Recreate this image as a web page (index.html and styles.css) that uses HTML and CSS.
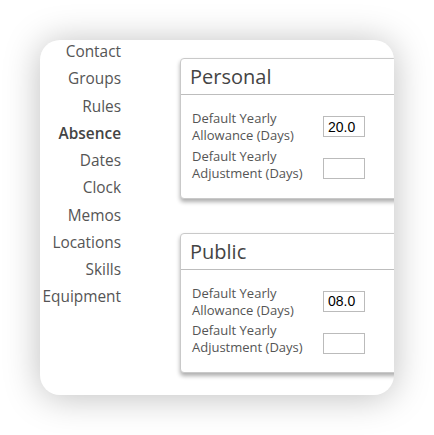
FILE: index.html
```html
<!DOCTYPE html>
<html lang="en">
<head>
<meta charset="utf-8">
<title>Absence settings</title>
<link rel="stylesheet" href="styles.css">
</head>
<body>
<div class="page">
  <div class="panel">
    <nav class="nav">
      <a class="nav-item">Contact</a>
      <a class="nav-item">Groups</a>
      <a class="nav-item">Rules</a>
      <a class="nav-item active">Absence</a>
      <a class="nav-item">Dates</a>
      <a class="nav-item">Clock</a>
      <a class="nav-item">Memos</a>
      <a class="nav-item">Locations</a>
      <a class="nav-item">Skills</a>
      <a class="nav-item">Equipment</a>
    </nav>
    <main class="content">
      <section class="card">
        <h2 class="card-title">Personal</h2>
        <div class="card-body">
          <div class="labels">
            <label class="label">Default Yearly<br>Allowance (Days)</label>
            <label class="label">Default Yearly<br>Adjustment (Days)</label>
          </div>
          <div class="inputs">
            <input class="field" type="text" value="20.0">
            <input class="field" type="text" value="">
          </div>
        </div>
      </section>
      <section class="card">
        <h2 class="card-title">Public</h2>
        <div class="card-body">
          <div class="labels">
            <label class="label">Default Yearly<br>Allowance (Days)</label>
            <label class="label">Default Yearly<br>Adjustment (Days)</label>
          </div>
          <div class="inputs">
            <input class="field" type="text" value="08.0">
            <input class="field" type="text" value="">
          </div>
        </div>
      </section>
    </main>
  </div>
</div>
</body>
</html>
```
FILE: styles.css
```css
html, body {
  margin: 0;
  padding: 0;
  background: #fff;
}

.page {
  padding: 40px;
}

.panel {
  width: 354px;
  height: 355px;
  background: #fff;
  border-radius: 20px;
  overflow: hidden;
  box-shadow: 0 2px 36px rgba(0, 0, 0, 0.26);
  display: flex;
  align-items: flex-start;
}

.nav {
  width: 81px;
  flex-shrink: 0;
  margin-top: -2px;
  display: flex;
  flex-direction: column;
  text-align: right;
  font-family: "Open Sans", "Liberation Sans", sans-serif;
  font-size: 15.4px;
  line-height: 27.25px;
  color: #555;
}

.nav-item {
  display: block;
}

.nav-item.active {
  font-weight: 600;
  color: #444;
}

.content {
  flex-shrink: 0;
  padding: 18px 0 0 59px;
  display: flex;
  flex-direction: column;
  gap: 34px;
}

.card {
  width: 260px;
  border: 1px solid #c9c9c9;
  border-radius: 4px;
  background: #fff;
  box-shadow: 0 3px 4px rgba(0, 0, 0, 0.32);
}

.card-title {
  margin: 0;
  height: 35px;
  padding: 0 9px;
  line-height: 35px;
  font-family: "Open Sans", "Liberation Sans", sans-serif;
  font-size: 20px;
  font-weight: 500;
  color: #444;
  border-bottom: 1px solid #bdbdbd;
}

.card-body {
  display: flex;
  padding: 15px 11px 16px;
}

.labels {
  width: 131px;
  display: flex;
  flex-direction: column;
  gap: 3.5px;
}

.label {
  font-family: "Open Sans", "Liberation Sans", sans-serif;
  font-size: 13px;
  line-height: 17px;
  color: #555;
}

.inputs {
  display: flex;
  flex-direction: column;
  gap: 21px;
  padding-top: 6px;
}

.field {
  box-sizing: border-box;
  width: 42px;
  height: 21px;
  margin: 0;
  padding: 0 4px;
  border: 1px solid #bbb;
  border-radius: 0;
  font-family: "Liberation Sans", Arial, sans-serif;
  font-size: 14px;
  color: #000;
  background: #fff;
  outline: none;
}
```
